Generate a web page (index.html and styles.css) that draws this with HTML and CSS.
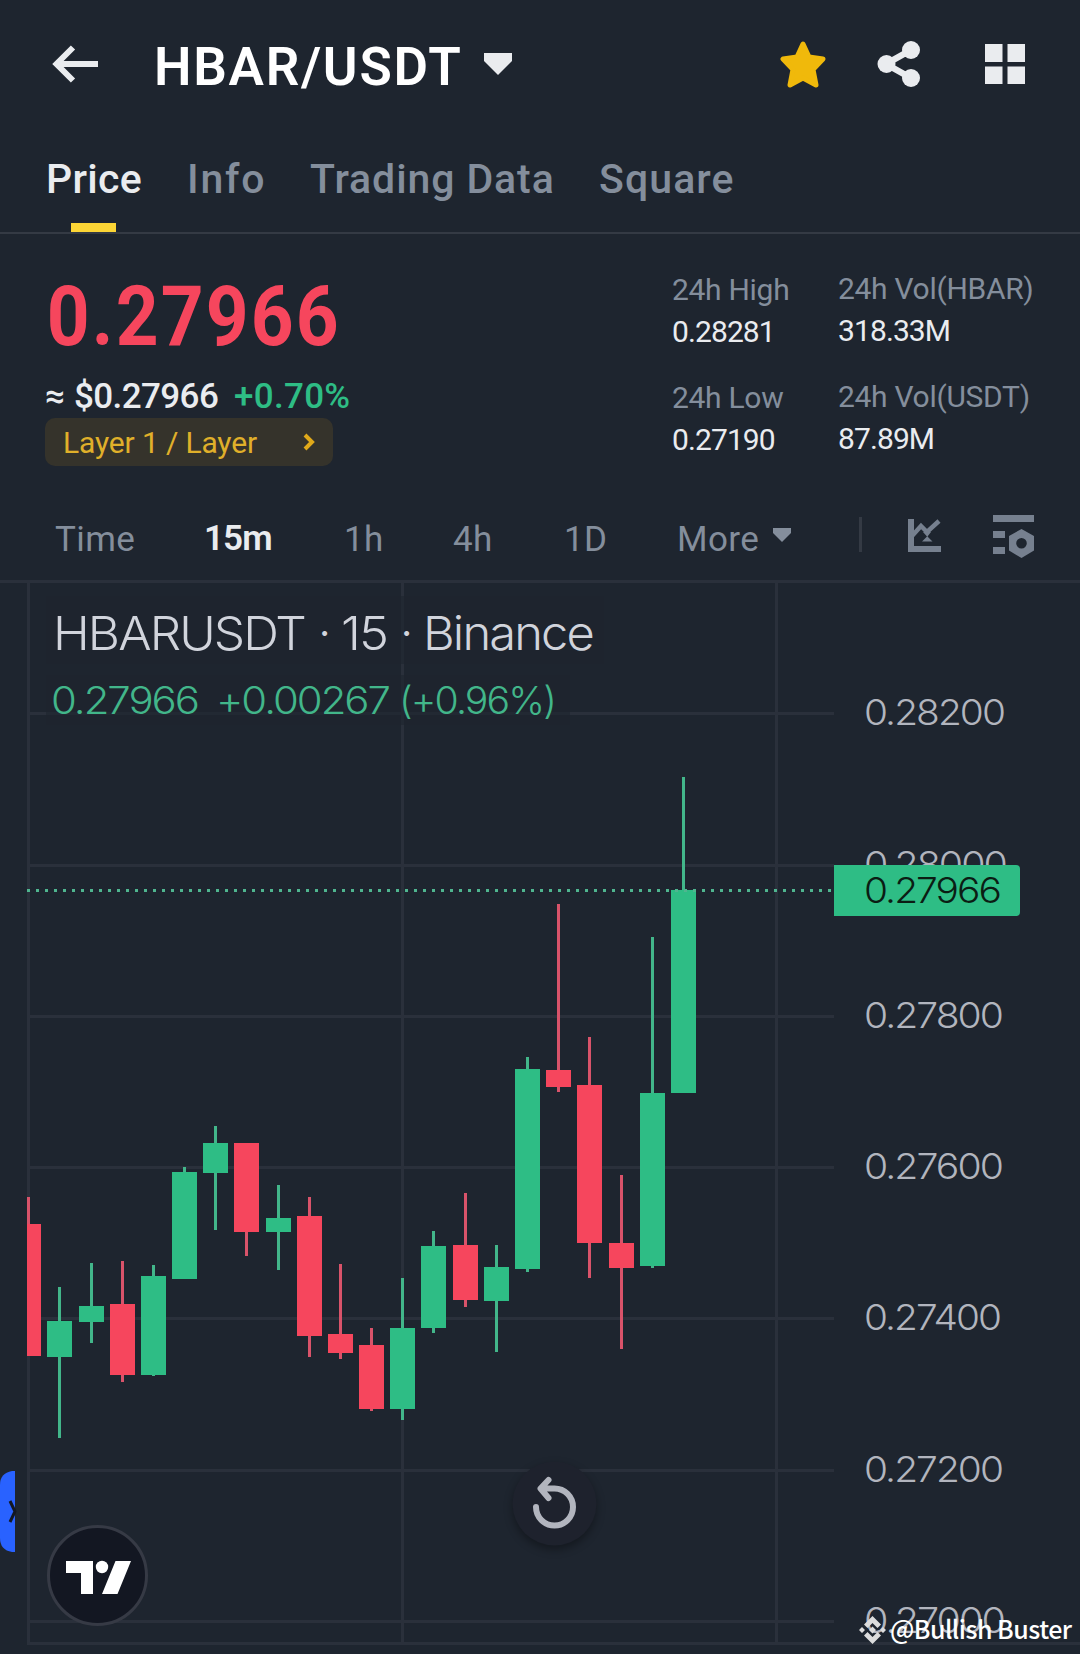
FILE: index.html
```
<!DOCTYPE html>
<html lang="en">
<head>
    <meta charset="UTF-8">
    <meta name="viewport" content="width=device-width, initial-scale=1.0">
    <title>HBAR/USDT</title>
    <link rel="stylesheet" href="styles.css">
</head>
<body>

    <!-- Top bar -->
    <header class="top-bar">
        <svg class="back" width="48" height="38" viewBox="0 0 48 38">
            <path d="M46 19H5M21 2.500L4.500 19L21 35.500" fill="none" stroke="#eaecef" stroke-width="6"/>
        </svg>
        <h1 class="pair">HBAR/USDT</h1>
        <svg class="caret" width="28" height="22" viewBox="0 0 28 22"><path d="M0 0H28V8L14 22L0 8Z" fill="#eaecef"/></svg>
        <svg class="star" width="46" height="48" viewBox="0 0 46 48">
            <path d="M23 4L29 17L43 19L33 29.500L36 45L23 38L10 45L13 29.500L3 19L17 17Z" fill="#f0b90b" stroke="#f0b90b" stroke-width="5" stroke-linejoin="round"/>
        </svg>
        <svg class="share" width="44" height="48" viewBox="0 0 44 48">
            <path d="M34 10L9 24L34 38" fill="none" stroke="#eaecef" stroke-width="6.500"/>
            <circle cx="34" cy="10" r="9" fill="#eaecef"/>
            <circle cx="9.500" cy="24" r="9" fill="#eaecef"/>
            <circle cx="34" cy="38" r="9" fill="#eaecef"/>
        </svg>
        <svg class="apps" width="40" height="40" viewBox="0 0 40 40">
            <path d="M0 0H17.500V18H0ZM22.500 0H40V18H22.500ZM0 22.500H17.500V40H0ZM22.500 22.500H40V40H22.500Z" fill="#eaecef"/>
        </svg>
    </header>

    <!-- Tabs -->
    <nav class="tabs">
        <span class="tab active">Price</span>
        <span class="tab info">Info</span>
        <span class="tab trading">Trading Data</span>
        <span class="tab square">Square</span>
    </nav>

    <!-- Price summary -->
    <section class="summary">
        <div class="price-block">
            <div class="last-price">0.27966</div>
            <div class="fiat"><span class="approx">≈</span><span class="usd">$0.27966</span><span class="change">+0.70%</span></div>
            <div class="tag">
                <span>Layer 1 / Layer</span>
                <svg width="12" height="18" viewBox="0 0 12 18"><path d="M2 2L9 9L2 16" fill="none" stroke="#e0a91a" stroke-width="4"/></svg>
            </div>
        </div>
        <div class="stats">
            <div class="stat"><div class="label">24h High</div><div class="value">0.28281</div></div>
            <div class="stat up"><div class="label">24h Vol(HBAR)</div><div class="value">318.33M</div></div>
            <div class="stat"><div class="label">24h Low</div><div class="value">0.27190</div></div>
            <div class="stat up"><div class="label">24h Vol(USDT)</div><div class="value">87.89M</div></div>
        </div>
    </section>

    <!-- Intervals -->
    <div class="intervals">
        <span>Time</span>
        <span class="selected">15m</span>
        <span>1h</span>
        <span>4h</span>
        <span>1D</span>
        <span>More</span>
        <svg class="more-caret" width="18" height="14" viewBox="0 0 18 14"><path d="M0 0H18V5L9 14L0 5Z" fill="#848e9c"/></svg>
        <i class="divider"></i>
        <svg class="draw" width="33" height="33" viewBox="0 0 33 33">
            <path d="M3 0V30H33" fill="none" stroke="#76808f" stroke-width="6"/>
            <path d="M4 17L13 7L19 13L31 2" fill="none" stroke="#76808f" stroke-width="4.500"/>
            <path d="M15 13H23L19.500 17.500L24.500 22.500H14L19 17.500Z" fill="#76808f"/>
        </svg>
        <svg class="settings" width="42" height="43" viewBox="0 0 42 43">
            <path d="M0 0H41V7H0ZM0 16H12V23H0ZM0 32H12V39H0Z" fill="#76808f"/>
            <path fill-rule="evenodd" d="M28.500 14L41 21V35.500L28.500 43L16 35.500V21ZM28.500 23A5.300 5.300 0 1 0 28.500 33.600A5.300 5.300 0 1 0 28.500 23Z" fill="#76808f"/>
        </svg>
    </div>

    <!-- Chart -->
    <main class="chart">
        <svg id="chart" width="1080" height="1074" viewBox="0 580 1080 1074">
            <g id="grid" fill="#2a303b"></g>
            <g id="candles"></g>
            <path d="M27 890.500H834" stroke="#4fb58f" stroke-width="3" stroke-dasharray="3 6"/>

            <rect x="46" y="596" width="558" height="68" fill="#1e252f" opacity=".6"/>
            <rect x="46" y="675" width="524" height="50" fill="#1e252f" opacity=".6"/>
            <g class="symbol">
                <text x="53" y="649.500" textLength="252" lengthAdjust="spacingAndGlyphs">HBARUSDT</text>
                <text x="318" y="649.500">·</text>
                <text x="341" y="649.500" textLength="46" lengthAdjust="spacingAndGlyphs">15</text>
                <text x="400" y="649.500">·</text>
                <text x="423" y="649.500" textLength="170" lengthAdjust="spacingAndGlyphs">Binance</text>
            </g>
            <g class="ohlc">
                <text x="51" y="714" textLength="147" lengthAdjust="spacingAndGlyphs">0.27966</text>
                <text x="216" y="714" textLength="173" lengthAdjust="spacingAndGlyphs">+0.00267</text>
                <text x="399" y="714" textLength="156" lengthAdjust="spacingAndGlyphs">(+0.96%)</text>
            </g>
            <g class="axis" id="axis"></g>
            <path d="M834 865H1016Q1020 865 1020 869V912Q1020 916 1016 916H834Z" fill="#2ebd85"/>
            <text class="axis-current" x="864" y="902.500" textLength="136" lengthAdjust="spacingAndGlyphs">0.27966</text>

            <!-- side handle -->
            <path d="M15 1471H12Q0 1473 0 1485V1538Q0 1550 12 1552H15Z" fill="#2962ff"/>
            <path d="M10 1501L15 1511.500L10 1522" fill="none" stroke="#131722" stroke-width="3"/>

            <!-- reset button -->
            <circle class="reset" cx="554.500" cy="1503.500" r="42"/>
            <path d="M536 1507A18.500 18.500 0 1 0 554.500 1488.500H541M548.500 1480L540.500 1488.500L548.500 1498" fill="none" stroke="#b2b5be" stroke-width="6" stroke-linecap="round" stroke-linejoin="round"/>

            <!-- TradingView mark -->
            <circle cx="97.500" cy="1575.500" r="49" fill="#131722" stroke="#363a45" stroke-width="3"/>
            <path d="M66 1561H93V1594H81V1573H66ZM115.500 1561H131L117.500 1594H102Z" fill="#fff"/>
            <circle cx="102" cy="1567" r="6.200" fill="#fff"/>

            <!-- author mark -->
            <path d="M872.500 1616L881 1624.500L877.500 1628L872.500 1623L867.500 1628L864 1624.500ZM872.500 1644L864 1635.500L867.500 1632L872.500 1637L877.500 1632L881 1635.500ZM872.500 1626.500L876 1630L872.500 1633.500L869 1630ZM862 1627L865 1630L862 1633L859 1630ZM883 1627L886 1630L883 1633L880 1630Z" fill="#dcdcdc"/>
            <text class="author" x="890" y="1639" textLength="182">@Bullish Buster</text>
        </svg>
    </main>

    <script>
        // x, body top, body bottom, wick top, wick bottom, up
        const candles = [
            [47, 1321, 1357, 1287, 1438, 1],
            [79, 1306, 1322, 1263, 1343, 1],
            [110, 1304, 1375, 1261, 1382, 0],
            [141, 1276, 1375, 1265, 1376, 1],
            [172, 1172, 1279, 1167, 1279, 1],
            [203, 1143, 1173, 1126, 1230, 1],
            [234, 1143, 1232, 1143, 1256, 0],
            [266, 1218, 1232, 1185, 1270, 1],
            [297, 1216, 1336, 1197, 1357, 0],
            [328, 1334, 1353, 1264, 1359, 0],
            [359, 1345, 1409, 1328, 1411, 0],
            [390, 1328, 1409, 1278, 1420, 1],
            [421, 1246, 1328, 1231, 1333, 1],
            [453, 1245, 1300, 1193, 1307, 0],
            [484, 1267, 1301, 1245, 1352, 1],
            [515, 1069, 1269, 1057, 1272, 1],
            [546, 1070, 1087, 904, 1092, 0],
            [577, 1085, 1243, 1037, 1278, 0],
            [609, 1243, 1268, 1175, 1349, 0],
            [640, 1093, 1266, 937, 1268, 1],
            [671, 890, 1093, 777, 1093, 1]
        ];
        const labels = [
            ['0.28200', 712, 140], ['0.28000', 864, 142], ['0.27800', 1015, 138], ['0.27600', 1166, 138],
            ['0.27400', 1317, 136], ['0.27200', 1469, 138], ['0.27000', 1620, 140]
        ];

        function rect(x, y, w, h, fill) {
            return `<rect x="${x}" y="${y}" width="${w}" height="${h}"${fill ? ` fill="${fill}"` : ''}/>`;
        }

        let grid = rect(0, 580, 1080, 3) + rect(27, 1642, 1053, 3);
        [27, 401, 775].forEach(x => grid += rect(x, 580, 3, 1062));
        labels.forEach(l => grid += rect(27, l[1], 807, 3));
        document.getElementById('grid').innerHTML = grid;

        // first candle is cut off by the left edge
        let bars = rect(27, 1197, 3, 30, '#d9536a') + rect(27, 1224, 14, 132, '#f6465d');
        candles.forEach(([x, top, bottom, high, low, up]) => {
            bars += rect(x + 11, high, 3, low - high, up ? '#42b68a' : '#d9536a');
            bars += rect(x, top, 25, bottom - top, up ? '#2ebd85' : '#f6465d');
        });
        document.getElementById('candles').innerHTML = bars;

        document.getElementById('axis').innerHTML = labels.map(([text, y, w]) =>
            `<text x="864" y="${y + 13}" textLength="${w}" lengthAdjust="spacingAndGlyphs">${text}</text>`).join('');
    </script>
</body>
</html>
```
FILE: styles.css
```
* {
    box-sizing: border-box;
}
body {
    margin: 0;
    width: 1080px;
    height: 1654px;
    overflow: hidden;
    background-color: #1e252f;
    color: #eaecef;
    font-family: Roboto, "Liberation Sans", sans-serif;
}
svg {
    display: block;
    flex: none;
}
.top-bar {
    display: flex;
    align-items: center;
    height: 129px;
    padding: 0 0 1px 52px;
}
.pair {
    width: 330px;
    margin: 5px 0 0 54px;
    font-size: 53px;
    font-weight: 600;
    line-height: 60px;
    letter-spacing: 1.7px;
    color: #fff;
}
.star {
    margin-left: 268px;
}
.share {
    margin-left: 51px;
}
.apps {
    margin-left: 64px;
}
.tabs {
    display: grid;
    grid-template-columns: 141px 123px 288px 1fr;
    height: 105px;
    padding-left: 46px;
    border-bottom: 2px solid #343a44;
    font-size: 41px;
    font-weight: 500;
    line-height: 48px;
    color: #848e9c;
}
.tab {
    display: flex;
    flex-direction: column;
    padding-top: 26px;
    letter-spacing: 0.9px;
}
.tab.active {
    letter-spacing: 0.3px;
    color: #eaecef;
}
.tab.info {
    letter-spacing: 1.8px;
}
.tab.square {
    padding-left: 1px;
    letter-spacing: 1.1px;
}
.tab.active::after {
    content: "";
    width: 45px;
    height: 9px;
    margin: 20px 0 0 25px;
    background: #fcd535;
}
.summary {
    display: flex;
    height: 274px;
    padding-left: 45px;
}
.price-block {
    width: 627px;
    padding-top: 37px;
}
.last-price {
    padding-left: 2px;
    font-size: 83px;
    font-weight: 700;
    line-height: 92px;
    letter-spacing: 2.4px;
    color: #f6465d;
    transform: scaleX(0.9);
    transform-origin: left;
}
.fiat {
    display: flex;
    height: 55px;
    font-size: 35px;
    font-weight: 500;
    line-height: 68px;
}
.approx {
    width: 29px;
}
.usd {
    width: 160px;
    letter-spacing: -0.6px;
}
.change {
    letter-spacing: 0.3px;
    color: #2ebd85;
}
.tag {
    display: flex;
    align-items: center;
    justify-content: space-between;
    width: 288px;
    height: 48px;
    padding: 0 18px;
    border-radius: 10px;
    background: #35332b;
    color: #e0b02a;
    font-size: 30px;
    letter-spacing: -0.15px;
}
.stats {
    display: grid;
    grid-template-columns: 166px 1fr;
    grid-auto-rows: 108px;
    padding-top: 34px;
}
.stat {
    padding-top: 1px;
    font-size: 30px;
    line-height: 42px;
}
.stat.up {
    padding-top: 0;
}
.label {
    letter-spacing: -0.3px;
    color: #848e9c;
}
.value {
    letter-spacing: -0.9px;
}
.intervals {
    display: grid;
    grid-template-columns: 149px 140px 109px 111px 113px 96px 86px 49px 84px 42px;
    height: 72px;
    padding: 8px 0 0 55px;
    font-size: 35px;
    line-height: 48px;
    letter-spacing: 0.4px;
    color: #848e9c;
}
.intervals .selected {
    font-weight: 600;
    line-height: 46px;
    letter-spacing: -0.9px;
    color: #eaecef;
}
.more-caret {
    margin-top: 12px;
}
.divider {
    width: 3px;
    height: 35px;
    margin-top: 1px;
    background: #343a44;
}
.draw {
    margin-top: 3px;
}
.settings {
    margin: -1px 0 0 1px;
}
.chart {
    height: 1074px;
}
.symbol, .ohlc, .axis, .axis-current {
    font-family: Inter, "Liberation Sans", sans-serif;
    font-weight: 300;
    letter-spacing: -1.8px;
}
.symbol {
    font-size: 47px;
    fill: #d1d4dc;
}
.ohlc {
    font-size: 38px;
    fill: #42b68a;
}
.axis, .axis-current {
    font-size: 36px;
    fill: #b2b5be;
}
.axis-current {
    fill: #0b1d14;
}
.reset {
    fill: #1e222d;
    filter: drop-shadow(0 4px 4px rgba(0, 0, 0, 0.35));
}
.author {
    font-family: "Noto Sans CJK SC", "Noto Sans", sans-serif;
    font-size: 25px;
    font-weight: 500;
    fill: #fff;
}
```
